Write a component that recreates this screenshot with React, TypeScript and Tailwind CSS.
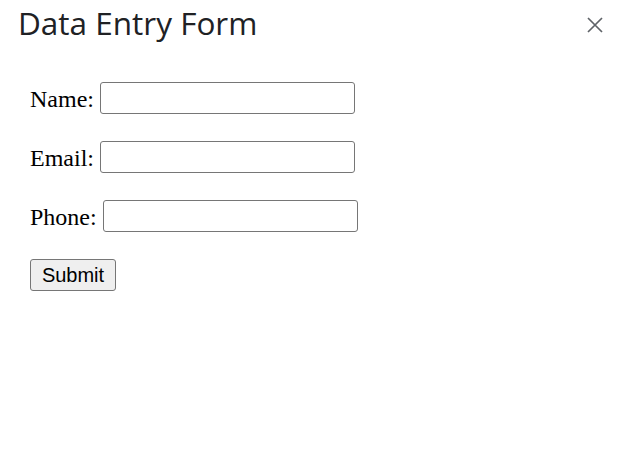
import React from "react";

export default function App() {
  const rows = ["Name:", "Email:", "Phone:"];
  return (
    <div className="w-[635px] h-[456px] bg-white relative">
      <div className="flex items-start justify-between pl-[18px] pr-[32px] pt-[1px]">
        <h1
          className="text-[31.5px] leading-[44px] text-[#202124]"
          style={{ fontFamily: "'Open Sans', Roboto, sans-serif" }}
        >
          Data Entry Form
        </h1>
        <svg width="16" height="16" viewBox="0 0 16 16" className="mt-[16px]">
          <path d="M1 1 L15 15 M15 1 L1 15" stroke="#5f6368" strokeWidth="1.7" fill="none" />
        </svg>
      </div>
      <div
        className="flex flex-col gap-[23px] pl-[30px] mt-[35px] text-[24px] text-black"
        style={{ fontFamily: "'Liberation Serif', 'Times New Roman', serif" }}
      >
        {rows.map((r) => (
          <div key={r} className="flex items-center h-[36px] gap-[6px]">
            <label className="leading-[28px] pt-[2px]">{r}</label>
            <input
              type="text"
              className="w-[255px] h-[32px] border border-[#767676] rounded-[3px] bg-white px-[3px] text-[20px]"
              style={{ fontFamily: "'Liberation Sans', Arial, sans-serif" }}
            />
          </div>
        ))}
        <div className="flex items-center h-[36px]">
          <button
            className="h-[32px] w-[86px] border border-[#767676] rounded-[3px] bg-[#efefef] text-[20px] leading-[24px] text-black"
            style={{ fontFamily: "'Liberation Sans', Arial, sans-serif" }}
          >
            Submit
          </button>
        </div>
      </div>
    </div>
  );
}
